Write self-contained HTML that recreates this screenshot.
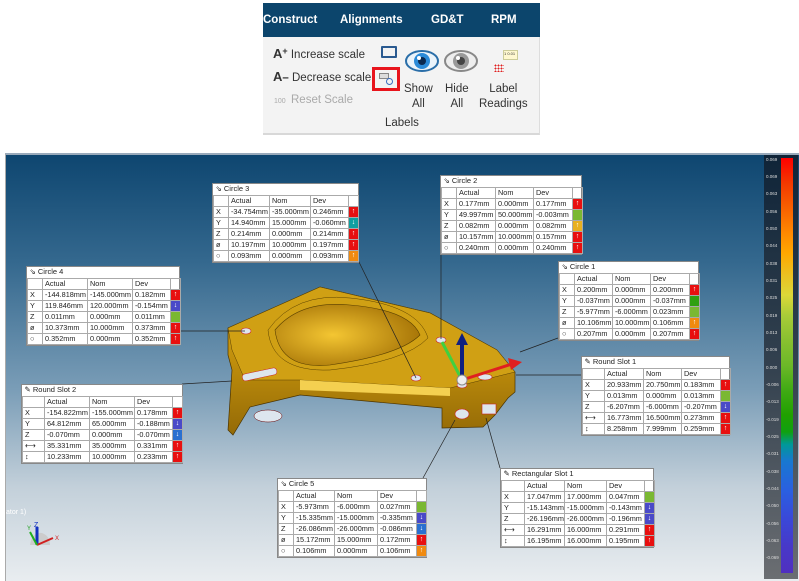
<!DOCTYPE html>
<html><head><meta charset="utf-8">
<style>
*{margin:0;padding:0;box-sizing:border-box}
body{width:799px;height:581px;background:#fff;position:relative;overflow:hidden;font-family:"Liberation Sans",sans-serif}
.rib{position:absolute;left:263px;top:3px;width:277px;height:34px;background:#0c456c;color:#fff;font-size:11.5px;font-weight:bold}
.rib span{position:absolute;top:11px}
.pan{position:absolute;left:263px;top:37px;width:277px;height:98px;background:#f3f3f3;border-bottom:2px solid #d8d8d8;border-right:1px solid #ddd;font-size:11.5px;color:#333}
.pan div{position:absolute;white-space:nowrap}
.vp{position:absolute;left:5px;top:153px;width:794px;height:428px;background:linear-gradient(#0e4670 0%,#34688e 25%,#7a9db7 55%,#c3d0da 78%,#e9edf0 100%);border-top:2px solid #9ab;border-left:1px solid #aaa}
.t{position:absolute;background:#fff;border:1px solid #888;font-size:7.3px;color:#222}
.t table{border-collapse:collapse;width:100%;table-layout:fixed}
.t td{border:1px solid #aaa;height:11px;padding:0 2px;white-space:nowrap;overflow:hidden;line-height:10px}
.t .h td{border:none;border-bottom:1px solid #aaa;font-size:7.5px}
.i{padding:0!important;text-align:center;color:#fff;font-size:7px;font-weight:bold}
.r{background:#e81010}.b{background:#4a4ac8}.g{background:#7ab832}.o{background:#f08a10}.tl{background:#10a0a0}.y{background:#e8b020}.gg{background:#30a010}.bb{background:#2a70d0}
.cb{position:absolute;left:764px;top:155px;width:34px;height:424px;background:linear-gradient(#0f2438,#33414f 50%,#6b6e72)}
.cb .s{position:absolute;left:17px;width:12px}
.cb .l{position:absolute;left:2px;font-size:4.5px;color:#ddd}
</style></head><body>
<div class="rib"><span style="left:0">Construct</span><span style="left:77px">Alignments</span><span style="left:168px">GD&amp;T</span><span style="left:228px">RPM</span></div>
<div class="pan">
<div style="left:10px;top:9px"><b style="font-size:13px">A</b><b style="font-size:9px;vertical-align:top">+</b> Increase scale</div>
<div style="left:10px;top:32px"><b style="font-size:13px">A</b><b>–</b> Decrease scale</div>
<div style="left:11px;top:57px;color:#aaa"><span style="font-size:7px">100<br></span></div>
<div style="left:28px;top:57px;color:#aaa">Reset Scale</div>
<div style="left:118px;top:9px;width:16px;height:12px;border:2px solid #2a5a90;border-radius:1px"></div>
<div style="left:109px;top:30px;width:28px;height:24px;border:3px solid #e8141c"></div>
<div style="left:116px;top:36px;width:10px;height:6px;border:1px solid #888;background:#ddd"></div>
<div style="left:123px;top:41px;width:7px;height:7px;border:1px solid #3a6ec0;border-radius:50%"></div>
<svg style="position:absolute;left:142px;top:12px" width="34" height="24"><ellipse cx="17" cy="12" rx="16" ry="10" fill="#eaf3fa" stroke="#2a6ea8" stroke-width="2"/><circle cx="17" cy="12" r="8" fill="#2a8ad8"/><circle cx="17" cy="12" r="4" fill="#0b2a50"/><circle cx="14" cy="9" r="2" fill="#fff"/></svg>
<svg style="position:absolute;left:181px;top:12px" width="34" height="24"><ellipse cx="17" cy="12" rx="16" ry="10" fill="#eee" stroke="#888" stroke-width="2"/><circle cx="17" cy="12" r="8" fill="#999"/><circle cx="17" cy="12" r="4" fill="#444"/><circle cx="14" cy="9" r="2" fill="#fff"/></svg>
<div style="left:141px;top:45px;text-align:center;line-height:15px">Show<br>All</div>
<div style="left:182px;top:45px;text-align:center;line-height:15px">Hide<br>All</div>
<div style="left:240px;top:13px;width:15px;height:10px;background:#fff8d0;border:1px solid #cc9;font-size:4px">1 0.01</div>
<div style="left:231px;top:27px;width:10px;height:8px;background:radial-gradient(#e02020 40%,transparent 45%) 0 0/3px 3px"></div>
<div style="left:216px;top:45px;text-align:center;line-height:15px">Label<br>Readings</div>
<div style="left:122px;top:80px">Labels</div>
</div>

<div class="vp"></div>

<svg style="position:absolute;left:0;top:0" width="799" height="581">
<defs><linearGradient id="gd" x1="0" y1="0" x2="0" y2="1"><stop offset="0" stop-color="#dcaa1c"/><stop offset=".5" stop-color="#bf8e0c"/><stop offset="1" stop-color="#946a06"/></linearGradient>
<radialGradient id="dm" cx=".4" cy=".5" r=".6"><stop offset="0" stop-color="#f4c632"/><stop offset="1" stop-color="#a87608"/></radialGradient></defs>
<path d="M228,328 L320,287 L430,313 L497,350 L515,372 L515,392 L508,398 L495,415 L483,427 L442,428 L442,408 L300,395 L250,407 L233,435 L228,430 L232,370 L228,355 Z" fill="url(#gd)" stroke="#4a3300" stroke-width=".7"/>
<path d="M228,328 L320,287 L430,313 L497,350 L515,372 L450,388 L300,380 L245,380 L232,350 Z" fill="#d0a014" stroke="#5a4000" stroke-width=".5"/>
<path d="M268,330 Q295,292 350,298 Q418,305 428,338 Q405,362 330,370 Q272,372 268,330Z" fill="none" stroke="#5a4000" stroke-width=".5"/>
<path d="M275,330 Q300,300 350,305 Q410,310 420,335 Q400,355 330,365 Q280,370 275,330Z" fill="url(#dm)" stroke="#5a4000" stroke-width=".6"/>
<path d="M300,380 L450,388 L450,396 L300,390 Z" fill="#f4d050"/>
<ellipse cx="268" cy="416" rx="14" ry="6" fill="#dde6ee" stroke="#600" stroke-width=".5"/>
<rect x="242" y="371" width="35" height="7" rx="3" fill="#dde6ee" stroke="#c22" stroke-width=".5" transform="rotate(-12 259 374)"/>
<ellipse cx="246" cy="331" rx="5" ry="3" fill="#dde6ee" stroke="#c22" stroke-width=".6"/>
<ellipse cx="441" cy="340" rx="5" ry="3" fill="#dde6ee" stroke="#c22" stroke-width=".6"/>
<ellipse cx="416" cy="378" rx="5" ry="3" fill="#dde6ee" stroke="#c22" stroke-width=".6"/>
<ellipse cx="462" cy="385" rx="5" ry="3" fill="#dde6ee" stroke="#c22" stroke-width=".6"/>
<ellipse cx="485" cy="377" rx="7" ry="3" fill="#dde6ee" stroke="#c22" stroke-width=".6"/>
<ellipse cx="462" cy="414" rx="7" ry="5" fill="#dde6ee" stroke="#c22" stroke-width=".6"/>
<rect x="482" y="404" width="14" height="10" fill="#dde6ee" stroke="#c22" stroke-width=".6"/>
<g stroke="#222" stroke-width=".7" fill="none">
<line x1="358" y1="260" x2="416" y2="378"/><line x1="179" y1="331" x2="245" y2="331"/>
<line x1="441" y1="252" x2="441" y2="339"/><line x1="558" y1="338" x2="520" y2="352"/>
<line x1="581" y1="375" x2="516" y2="375"/><line x1="182" y1="384" x2="232" y2="381"/>
<line x1="423" y1="478" x2="455" y2="420"/><line x1="500" y1="468" x2="486" y2="418"/></g>
<line x1="462" y1="380" x2="442" y2="342" stroke="#40d040" stroke-width="3"/>
<line x1="462" y1="380" x2="462" y2="343" stroke="#102080" stroke-width="4"/><path d="M456,345 L462,333 L468,345Z" fill="#102080"/>
<line x1="462" y1="380" x2="512" y2="364" stroke="#e02020" stroke-width="3"/><path d="M508,358 L522,362 L511,370Z" fill="#e02020"/>
<circle cx="462" cy="380" r="5" fill="#eee" stroke="#888"/>
<text x="6" y="514" font-size="7" fill="#fff" font-family="Liberation Sans">ator 1)</text>
<path d="M30,545 Q32,532 42,533 Q50,536 50,545Z" fill="#ccc"/>
<line x1="37" y1="545" x2="37" y2="527" stroke="#1030c0" stroke-width="3"/><line x1="37" y1="545" x2="53" y2="538" stroke="#d02020" stroke-width="2"/><line x1="37" y1="545" x2="30" y2="532" stroke="#20b020" stroke-width="2"/>
<text x="34" y="527" font-size="7" fill="#1030c0">Z</text><text x="27" y="530" font-size="6" fill="#20a020">Y</text><text x="55" y="540" font-size="6" fill="#d02020">X</text>
</svg>

<div class="cb">
<div class="s" style="top:3px;height:415px;background:linear-gradient(#f00 0%,#f33800 6%,#f86000 12%,#ff8800 18%,#ffa800 23%,#ecc020 28%,#dcd838 33%,#a8cc38 38%,#88c030 44%,#6cb828 50%,#40aa14 56%,#20a000 62%,#10a010 66%,#009898 69%,#1878d0 73%,#2a60e0 80%,#3a48d8 87%,#4838c8 94%,#5030c0 100%)"></div>
<div class="l" style="top:2px">0.069</div><div class="l" style="top:19px">0.069</div><div class="l" style="top:36px">0.063</div><div class="l" style="top:54px">0.056</div><div class="l" style="top:71px">0.050</div><div class="l" style="top:88px">0.044</div><div class="l" style="top:106px">0.038</div><div class="l" style="top:123px">0.031</div><div class="l" style="top:140px">0.025</div><div class="l" style="top:158px">0.019</div><div class="l" style="top:175px">0.013</div><div class="l" style="top:192px">0.006</div><div class="l" style="top:210px">0.000</div><div class="l" style="top:227px">-0.006</div><div class="l" style="top:244px">-0.013</div><div class="l" style="top:262px">-0.019</div><div class="l" style="top:279px">-0.025</div><div class="l" style="top:296px">-0.031</div><div class="l" style="top:314px">-0.038</div><div class="l" style="top:331px">-0.044</div><div class="l" style="top:348px">-0.050</div><div class="l" style="top:366px">-0.056</div><div class="l" style="top:383px">-0.063</div><div class="l" style="top:400px">-0.069</div>
</div>

<div class="t" style="left:212px;top:183px;width:147px"><table><colgroup><col style="width:15px"><col style="width:41px"><col style="width:41px"><col style="width:38px"><col style="width:10px"></colgroup>
<tr class="h"><td colspan="5">⇘ Circle 3</td></tr><tr><td></td><td>Actual</td><td>Nom</td><td>Dev</td><td></td></tr>
<tr><td>X</td><td>-34.754mm</td><td>-35.000mm</td><td>0.246mm</td><td class="i r">↑</td></tr>
<tr><td>Y</td><td>14.940mm</td><td>15.000mm</td><td>-0.060mm</td><td class="i tl">↓</td></tr>
<tr><td>Z</td><td>0.214mm</td><td>0.000mm</td><td>0.214mm</td><td class="i r">↑</td></tr>
<tr><td>ø</td><td>10.197mm</td><td>10.000mm</td><td>0.197mm</td><td class="i r">↑</td></tr>
<tr><td>○</td><td>0.093mm</td><td>0.000mm</td><td>0.093mm</td><td class="i o">↑</td></tr></table></div>

<div class="t" style="left:26px;top:266px;width:154px"><table><colgroup><col style="width:15px"><col style="width:45px"><col style="width:45px"><col style="width:38px"><col style="width:10px"></colgroup>
<tr class="h"><td colspan="5">⇘ Circle 4</td></tr><tr><td></td><td>Actual</td><td>Nom</td><td>Dev</td><td></td></tr>
<tr><td>X</td><td>-144.818mm</td><td>-145.000mm</td><td>0.182mm</td><td class="i r">↑</td></tr>
<tr><td>Y</td><td>119.846mm</td><td>120.000mm</td><td>-0.154mm</td><td class="i b">↓</td></tr>
<tr><td>Z</td><td>0.011mm</td><td>0.000mm</td><td>0.011mm</td><td class="i g"></td></tr>
<tr><td>ø</td><td>10.373mm</td><td>10.000mm</td><td>0.373mm</td><td class="i r">↑</td></tr>
<tr><td>○</td><td>0.352mm</td><td>0.000mm</td><td>0.352mm</td><td class="i r">↑</td></tr></table></div>

<div class="t" style="left:440px;top:175px;width:142px"><table><colgroup><col style="width:15px"><col style="width:39px"><col style="width:38px"><col style="width:39px"><col style="width:10px"></colgroup>
<tr class="h"><td colspan="5">⇘ Circle 2</td></tr><tr><td></td><td>Actual</td><td>Nom</td><td>Dev</td><td></td></tr>
<tr><td>X</td><td>0.177mm</td><td>0.000mm</td><td>0.177mm</td><td class="i r">↑</td></tr>
<tr><td>Y</td><td>49.997mm</td><td>50.000mm</td><td>-0.003mm</td><td class="i g"></td></tr>
<tr><td>Z</td><td>0.082mm</td><td>0.000mm</td><td>0.082mm</td><td class="i y">↑</td></tr>
<tr><td>ø</td><td>10.157mm</td><td>10.000mm</td><td>0.157mm</td><td class="i r">↑</td></tr>
<tr><td>○</td><td>0.240mm</td><td>0.000mm</td><td>0.240mm</td><td class="i r">↑</td></tr></table></div>

<div class="t" style="left:558px;top:261px;width:141px"><table><colgroup><col style="width:15px"><col style="width:38px"><col style="width:38px"><col style="width:39px"><col style="width:10px"></colgroup>
<tr class="h"><td colspan="5">⇘ Circle 1</td></tr><tr><td></td><td>Actual</td><td>Nom</td><td>Dev</td><td></td></tr>
<tr><td>X</td><td>0.200mm</td><td>0.000mm</td><td>0.200mm</td><td class="i r">↑</td></tr>
<tr><td>Y</td><td>-0.037mm</td><td>0.000mm</td><td>-0.037mm</td><td class="i gg"></td></tr>
<tr><td>Z</td><td>-5.977mm</td><td>-6.000mm</td><td>0.023mm</td><td class="i g"></td></tr>
<tr><td>ø</td><td>10.106mm</td><td>10.000mm</td><td>0.106mm</td><td class="i o">↑</td></tr>
<tr><td>○</td><td>0.207mm</td><td>0.000mm</td><td>0.207mm</td><td class="i r">↑</td></tr></table></div>

<div class="t" style="left:581px;top:356px;width:149px"><table><colgroup><col style="width:22px"><col style="width:39px"><col style="width:38px"><col style="width:39px"><col style="width:10px"></colgroup>
<tr class="h"><td colspan="5">✎ Round Slot 1</td></tr><tr><td></td><td>Actual</td><td>Nom</td><td>Dev</td><td></td></tr>
<tr><td>X</td><td>20.933mm</td><td>20.750mm</td><td>0.183mm</td><td class="i r">↑</td></tr>
<tr><td>Y</td><td>0.013mm</td><td>0.000mm</td><td>0.013mm</td><td class="i g"></td></tr>
<tr><td>Z</td><td>-6.207mm</td><td>-6.000mm</td><td>-0.207mm</td><td class="i b">↓</td></tr>
<tr><td>⟷</td><td>16.773mm</td><td>16.500mm</td><td>0.273mm</td><td class="i r">↑</td></tr>
<tr><td>↕</td><td>8.258mm</td><td>7.999mm</td><td>0.259mm</td><td class="i r">↑</td></tr></table></div>

<div class="t" style="left:21px;top:384px;width:162px"><table><colgroup><col style="width:22px"><col style="width:45px"><col style="width:45px"><col style="width:38px"><col style="width:10px"></colgroup>
<tr class="h"><td colspan="5">✎ Round Slot 2</td></tr><tr><td></td><td>Actual</td><td>Nom</td><td>Dev</td><td></td></tr>
<tr><td>X</td><td>-154.822mm</td><td>-155.000mm</td><td>0.178mm</td><td class="i r">↑</td></tr>
<tr><td>Y</td><td>64.812mm</td><td>65.000mm</td><td>-0.188mm</td><td class="i b">↓</td></tr>
<tr><td>Z</td><td>-0.070mm</td><td>0.000mm</td><td>-0.070mm</td><td class="i bb">↓</td></tr>
<tr><td>⟷</td><td>35.331mm</td><td>35.000mm</td><td>0.331mm</td><td class="i r">↑</td></tr>
<tr><td>↕</td><td>10.233mm</td><td>10.000mm</td><td>0.233mm</td><td class="i r">↑</td></tr></table></div>

<div class="t" style="left:277px;top:478px;width:150px"><table><colgroup><col style="width:15px"><col style="width:41px"><col style="width:43px"><col style="width:39px"><col style="width:10px"></colgroup>
<tr class="h"><td colspan="5">⇘ Circle 5</td></tr><tr><td></td><td>Actual</td><td>Nom</td><td>Dev</td><td></td></tr>
<tr><td>X</td><td>-5.973mm</td><td>-6.000mm</td><td>0.027mm</td><td class="i g"></td></tr>
<tr><td>Y</td><td>-15.335mm</td><td>-15.000mm</td><td>-0.335mm</td><td class="i b">↓</td></tr>
<tr><td>Z</td><td>-26.086mm</td><td>-26.000mm</td><td>-0.086mm</td><td class="i bb">↓</td></tr>
<tr><td>ø</td><td>15.172mm</td><td>15.000mm</td><td>0.172mm</td><td class="i r">↑</td></tr>
<tr><td>○</td><td>0.106mm</td><td>0.000mm</td><td>0.106mm</td><td class="i o">↑</td></tr></table></div>

<div class="t" style="left:500px;top:468px;width:154px"><table><colgroup><col style="width:23px"><col style="width:40px"><col style="width:42px"><col style="width:38px"><col style="width:10px"></colgroup>
<tr class="h"><td colspan="5">✎ Rectangular Slot 1</td></tr><tr><td></td><td>Actual</td><td>Nom</td><td>Dev</td><td></td></tr>
<tr><td>X</td><td>17.047mm</td><td>17.000mm</td><td>0.047mm</td><td class="i g"></td></tr>
<tr><td>Y</td><td>-15.143mm</td><td>-15.000mm</td><td>-0.143mm</td><td class="i b">↓</td></tr>
<tr><td>Z</td><td>-26.196mm</td><td>-26.000mm</td><td>-0.196mm</td><td class="i b">↓</td></tr>
<tr><td>⟷</td><td>16.291mm</td><td>16.000mm</td><td>0.291mm</td><td class="i r">↑</td></tr>
<tr><td>↕</td><td>16.195mm</td><td>16.000mm</td><td>0.195mm</td><td class="i r">↑</td></tr></table></div>
</body></html>
